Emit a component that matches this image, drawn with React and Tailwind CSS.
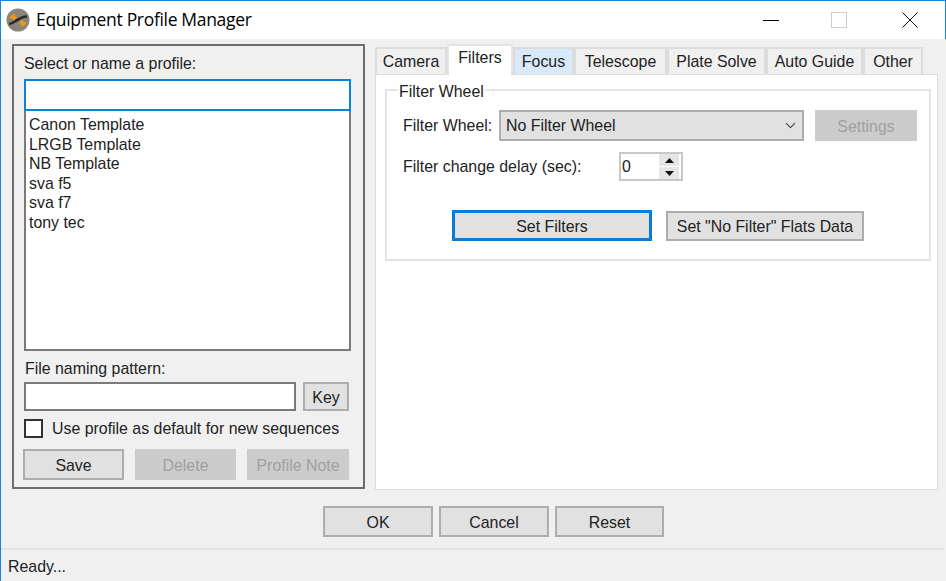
import { ChevronDown } from 'lucide-react';

const TABS = [
  ['Camera', 'w-[72px]'],
  ['Filters', 'w-[66px]'],
  ['Focus', 'w-[61px]'],
  ['Telescope', 'w-[93px]'],
  ['Plate Solve', 'w-[99px]'],
  ['Auto Guide', 'w-[97px]'],
  ['Other', 'w-[60px]'],
];
const PROFILES = ['Canon Template', 'LRGB Template', 'NB Template', 'sva f5', 'sva f7', 'tony tec'];

// Bouton WinForms: fond gris, bord gris clair
function Btn({ children, className = '', disabled = false }) {
  return (
    <div className={`flex items-center justify-center border-2 pt-[2px] ${disabled ? 'border-[#cccccc] bg-[#cccccc] text-[#a0a0a0]' : 'border-[#adadad] bg-[#e1e1e1] text-[#222222]'} ${className}`}>
      {children}
    </div>
  );
}

function Logo() {
  return (
    <svg width="24" height="24" viewBox="0 0 24 24" className="shrink-0">
      <circle cx="12" cy="12" r="11.5" fill="#8b8578" />
      <path d="M3 9.5 L8 5.5 L11 10 L8.5 12 Z" fill="#e39a1c" />
      <path d="M13 14 L15.5 12 L21 15 L16 19 Z" fill="#e39a1c" />
      <path d="M3 16 C7 16 9 13 12 11.5 C14 10.5 16 8.5 21 8.5" fill="none" stroke="#2b2b2b" strokeWidth="2.6" />
    </svg>
  );
}

export default function App() {
  return (
    <div className="w-[946px] h-[581px] flex flex-col overflow-hidden bg-[#f0f0f0] border-t border-l border-[#1088e0] text-[15.9px] text-[#222222] font-['Liberation_Sans',sans-serif] leading-none">
      {/* Barre de titre */}
      <div className="h-[38px] shrink-0 bg-white flex items-center pl-[5px] border-r border-[#1088e0]">
        <Logo />
        <span className="ml-[6px] text-[17.5px] font-['Open_Sans',sans-serif] tracking-[-0.32px] text-black">Equipment Profile Manager</span>
        <div className="grow" />
        <div className="w-[16px] h-px bg-black mr-[52px]" />
        <div className="w-[16px] h-[16px] border border-[#cccccc] mr-[55px]" />
        <svg width="16" height="16" viewBox="0 0 16 16" className="mr-[27px]">
          <path d="M0.5 0.5 L15.5 15.5 M15.5 0.5 L0.5 15.5" stroke="#111" strokeWidth="1" />
        </svg>
      </div>

      {/* Contenu */}
      <div className="flex pl-[11px] pt-[5px] h-[467px] shrink-0">
        {/* Profils */}
        <div className="w-[353px] h-[445px] border-2 border-[#6d6d6d] pl-[10px] pt-[10px] flex flex-col">
          <div className="h-[17px]">Select or name a profile:</div>
          <div className="mt-[6px] w-[327px] h-[32px] shrink-0 bg-white border-2 border-[#0a84d8]" />
          <div className="w-[327px] h-[240px] shrink-0 bg-white border-2 border-t-0 border-[#7a7a7a] pl-[3px] pt-[4px] flex flex-col">
            {PROFILES.map((p) => (
              <div key={p} className="h-[19.6px] leading-[19.6px]">{p}</div>
            ))}
          </div>
          <div className="mt-[10px] h-[17px] pl-px">File naming pattern:</div>
          <div className="mt-[4px] flex gap-[7px] h-[29px] shrink-0">
            <div className="w-[272px] bg-white border-2 border-[#7a7a7a]" />
            <Btn className="w-[46px]">Key</Btn>
          </div>
          <div className="mt-[8px] h-[19px] flex items-center">
            <div className="w-[19px] h-[19px] bg-white border-2 border-[#333333]" />
            <span className="ml-[9px]">Use profile as default for new sequences</span>
          </div>
          <div className="mt-[11px] -ml-px flex h-[31px] shrink-0">
            <Btn className="w-[101px]">Save</Btn>
            <Btn className="ml-[11px] w-[101px]" disabled>Delete</Btn>
            <Btn className="ml-[11px] w-[102px]" disabled>Profile Note</Btn>
          </div>
        </div>

        {/* Onglets */}
        <div className="ml-[10px] w-[563px] flex flex-col">
          <div className="h-[30px] shrink-0 flex items-end">
            {TABS.map(([label, w]) => {
              if (label === 'Filters') {
                return <div key={label} className={`${w} h-[31px] -mb-px z-10 bg-white border-2 border-b-0 border-[#e3e3e3] flex items-start justify-center pt-[4px]`}>{label}</div>;
              }
              return (
                <div key={label} className={`${w} h-[27px] border-2 border-b-0 border-[#dcdcdc] flex items-center justify-center ${label === 'Focus' ? 'bg-[#d8eaf9]' : 'bg-[#f0f0f0]'}`}>
                  {label}
                </div>
              );
            })}
          </div>
          <div className="h-[416px] bg-white border border-[#dcdcdc] pl-[9px] pt-[6px] pr-[6px]">
            <fieldset className="h-[180px] border-2 border-[#e3e3e3] pl-[10px] pr-[12px]">
              <legend className="px-px pt-[3px] h-[17px] ml-px">Filter Wheel</legend>
              <div className="mt-[12px] flex items-center h-[31px] pl-[6px]">
                <span className="w-[96px] pt-px">Filter Wheel:</span>
                <div className="w-[305px] h-full bg-[#e1e1e1] border-2 border-[#adadad] flex items-center justify-between pl-[5px] pr-[3px]">
                  <span className="pt-px">No Filter Wheel</span>
                  <ChevronDown size={17} strokeWidth={1.5} className="text-[#444444]" />
                </div>
                <Btn className="ml-[11px] w-[102px] h-full" disabled>Settings</Btn>
              </div>
              <div className="mt-[11px] flex items-center h-[29px] pl-[6px]">
                <span className="w-[216px]">Filter change delay (sec):</span>
                <div className="w-[64px] h-full bg-white border-2 border-[#c8c8c8] flex items-center pl-px pr-[2px]">
                  <span className="grow">0</span>
                  <div className="w-[20px] h-full flex flex-col gap-px">
                    <div className="grow bg-[#e6e6e6] flex items-center justify-center">
                      <svg width="9" height="5"><path d="M4.5 0 L9 5 L0 5 Z" fill="#111" /></svg>
                    </div>
                    <div className="grow bg-[#e6e6e6] flex items-center justify-center">
                      <svg width="9" height="5"><path d="M0 0 L9 0 L4.5 5 Z" fill="#111" /></svg>
                    </div>
                  </div>
                </div>
              </div>
              <div className="mt-[29px] flex items-start pl-[55px]">
                <Btn className="w-[200px] h-[31px] !border-[3px] !border-[#0a7cd6]">Set Filters</Btn>
                <Btn className="ml-[14px] w-[198px] h-[30px] mt-px">Set "No Filter" Flats Data</Btn>
              </div>
            </fieldset>
          </div>
        </div>
      </div>

      {/* Boutons du bas */}
      <div className="h-[42px] shrink-0 flex pl-[322px] gap-[6px] items-start">
        <Btn className="w-[110px] h-[31px]">OK</Btn>
        <Btn className="w-[110px] h-[31px]">Cancel</Btn>
        <Btn className="w-[109px] h-[31px]">Reset</Btn>
      </div>

      {/* Barre d'état */}
      <div className="grow border-t-2 border-[#e4e4e4] flex items-center pl-[7px] pt-[2px] mr-px">Ready...</div>
    </div>
  );
}
